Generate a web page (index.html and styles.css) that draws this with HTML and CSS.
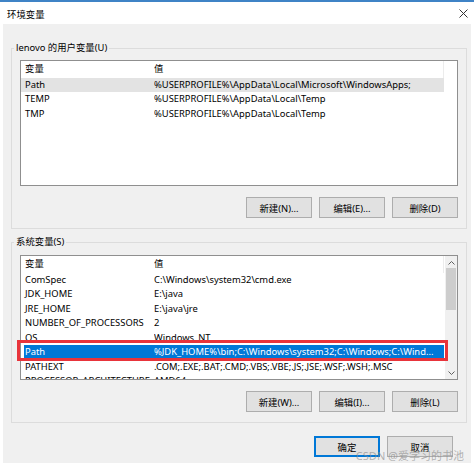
FILE: index.html
```html
<!DOCTYPE html>
<html lang="zh-CN">
<head>
  <meta charset="UTF-8" />
  <title>环境变量</title>
  <link rel="stylesheet" href="styles.css">
</head>
<body>
  <!-- TITOLO FINESTRA -->
  <div class="titlebar">
    <span class="title">环境变量</span>
    <svg class="close" width="9" height="9" viewBox="0 0 9 9">
      <path d="M0.5 0.5 L8.5 8.5 M8.5 0.5 L0.5 8.5" stroke="#333" stroke-width="1" fill="none" />
    </svg>
  </div>

  <div class="dialog">
    <!-- VARIABILI UTENTE -->
    <fieldset class="group">
      <legend>lenovo 的用户变量(U)</legend>
      <div class="listbox user-list">
        <div class="rows">
          <div class="row head"><span class="name">变量</span><span class="value">值</span></div>
          <div class="row inactive"><span class="name">Path</span><span class="value">%USERPROFILE%\AppData\Local\Microsoft\WindowsApps;</span></div>
          <div class="row"><span class="name">TEMP</span><span class="value">%USERPROFILE%\AppData\Local\Temp</span></div>
          <div class="row"><span class="name">TMP</span><span class="value">%USERPROFILE%\AppData\Local\Temp</span></div>
        </div>
      </div>
      <div class="buttons">
        <button>新建(N)...</button>
        <button>编辑(E)...</button>
        <button>删除(D)</button>
      </div>
    </fieldset>

    <!-- VARIABILI DI SISTEMA -->
    <fieldset class="group">
      <legend>系统变量(S)</legend>
      <div class="listbox sys-list">
        <div class="rows">
          <div class="row head"><span class="name">变量</span><span class="value">值</span></div>
          <div class="row"><span class="name">ComSpec</span><span class="value">C:\Windows\system32\cmd.exe</span></div>
          <div class="row"><span class="name">JDK_HOME</span><span class="value">E:\java</span></div>
          <div class="row"><span class="name">JRE_HOME</span><span class="value">E:\java\jre</span></div>
          <div class="row"><span class="name">NUMBER_OF_PROCESSORS</span><span class="value">2</span></div>
          <div class="row"><span class="name">OS</span><span class="value">Windows_NT</span></div>
          <div class="row selected"><span class="name">Path</span><span class="value">%JDK_HOME%\bin;C:\Windows\system32;C:\Windows;C:\Wind...</span></div>
          <div class="row"><span class="name">PATHEXT</span><span class="value">.COM;.EXE;.BAT;.CMD;.VBS;.VBE;.JS;.JSE;.WSF;.WSH;.MSC</span></div>
          <div class="row"><span class="name">PROCESSOR_ARCHITECTURE</span><span class="value">AMD64</span></div>
        </div>
        <div class="scrollbar">
          <svg width="7" height="4" viewBox="0 0 7 4"><path d="M0.5 3.5 L3.5 0.5 L6.5 3.5" stroke="#606060" fill="none" /></svg>
          <div class="track"><div class="thumb"></div></div>
          <svg width="7" height="4" viewBox="0 0 7 4"><path d="M0.5 0.5 L3.5 3.5 L6.5 0.5" stroke="#606060" fill="none" /></svg>
        </div>
        <!-- riquadro rosso -->
        <div class="mark"></div>
      </div>
      <div class="buttons">
        <button>新建(W)...</button>
        <button>编辑(I)...</button>
        <button>删除(L)</button>
      </div>
    </fieldset>

    <div class="footer">
      <button class="default">确定</button>
      <button>取消</button>
    </div>

    <div class="watermark">CSDN @爱学习的书池</div>
  </div>
</body>
</html>
```

FILE: styles.css
```css
body {
  margin: 0;
  background: #fff;
  color: #000;
  font-family: "Noto Sans", "Noto Sans CJK SC", sans-serif;
  font-size: 9.4px;
}

.titlebar {
  height: 22px;
  border-top: 2px solid #3f83c6;
  background: #fff;
  display: flex;
  align-items: center;
  justify-content: space-between;
  padding: 0 6px 0 7px;
}

.title {
  margin-top: 1px;
}

.close {
  margin-top: 1px;
}

.dialog {
  position: relative;
  margin: 0 3px;
  background: #f0f0f0;
  padding: 16px 0 6px;
  height: 417px;
}

.group {
  margin: 0 4px 0 8px;
  padding: 0 8px 10px;
  border: 1px solid #dcdcdc;
}

.group + .group {
  margin-top: 5px;
}

legend {
  height: 16px;
  line-height: 16px;
  padding: 0 2px;
  margin-left: -6px;
}

.listbox {
  position: relative;
  display: flex;
  background: #fff;
  border: 1px solid #8f8f8f;
}

.user-list {
  height: 124px;
  margin-top: 4px;
}

.sys-list {
  height: 123px;
  margin-top: 5px;
}

.rows {
  width: 423px;
  overflow: hidden;
}

.row {
  display: grid;
  grid-template-columns: 129px 1fr;
  height: 14.5px;
  line-height: 14.5px;
  white-space: nowrap;
  padding-left: 4px;
}

.row.head {
  height: 16.5px;
  line-height: 16.5px;
  border-right: 1px solid #ececec;
}

.row .value {
  overflow: hidden;
}

.row.inactive {
  background: #e3e3e3;
}

.row.selected {
  color: #fff;
  background: #0078d7;
  border-left: 3px solid #fff;
  padding-left: 1px;
}

.scrollbar {
  flex: 1;
  display: flex;
  flex-direction: column;
  align-items: center;
  background: #f0f0f0;
  padding: 5px 0 4px;
  margin-left: 1px;
}

.track {
  flex: 1;
  width: 100%;
  padding: 3px 1px 0;
  box-sizing: border-box;
}

.thumb {
  height: 42px;
  background: #cdcdcd;
}

.mark {
  position: absolute;
  left: -4px;
  top: 84px;
  width: 431px;
  height: 21px;
  box-sizing: border-box;
  border: 3px solid #e8343b;
}

.buttons {
  display: flex;
  justify-content: flex-end;
  gap: 7px;
  margin-top: 11px;
}

button {
  width: 66px;
  height: 21px;
  padding: 0;
  font-family: inherit;
  font-size: 9.4px;
  color: #000;
  background: #e1e1e1;
  border: 1px solid #adadad;
}

button.default {
  border: 2px solid #0078d7;
}

.footer {
  display: flex;
  justify-content: flex-end;
  gap: 7px;
  margin: 13px 18px 0 0;
}

.watermark {
  position: absolute;
  right: 7px;
  bottom: 1px;
  line-height: 12px;
  font-size: 11px;
  color: rgba(140, 140, 140, 0.65);
  white-space: nowrap;
}
```
